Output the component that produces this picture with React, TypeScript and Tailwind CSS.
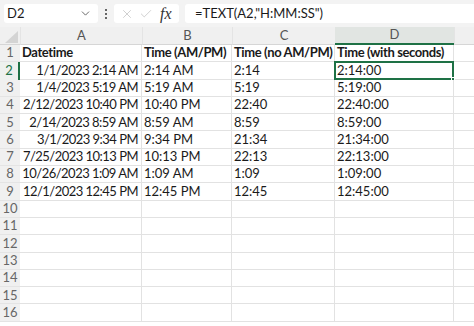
import { ChevronDown, X, Check } from "lucide-react";

const rows: string[][] = [
  ["Datetime", "Time (AM/PM)", "Time (no AM/PM)", "Time (with seconds)"],
  ["1/1/2023 2:14 AM", "2:14 AM", "2:14", "2:14:00"],
  ["1/4/2023 5:19 AM", "5:19 AM", "5:19", "5:19:00"],
  ["2/12/2023 10:40 PM", "10:40 PM", "22:40", "22:40:00"],
  ["2/14/2023 8:59 AM", "8:59 AM", "8:59", "8:59:00"],
  ["3/1/2023 9:34 PM", "9:34 PM", "21:34", "21:34:00"],
  ["7/25/2023 10:13 PM", "10:13 PM", "22:13", "22:13:00"],
  ["10/26/2023 1:09 AM", "1:09 AM", "1:09", "1:09:00"],
  ["12/1/2023 12:45 PM", "12:45 PM", "12:45", "12:45:00"],
];

const cols = ["A", "B", "C", "D"];

export default function App() {
  const allRows = Array.from({ length: 16 }, (_, i) => rows[i] ?? ["", "", "", ""]);

  return (
    <div
      className="w-[474px] h-[326px] overflow-hidden bg-white text-[#1a1a1a]"
      style={{ fontFamily: 'Lato, "Noto Sans", sans-serif' }}
    >
      {/* formula bar */}
      <div className="h-[27px] bg-[#f3f3f3] flex items-center pl-1 gap-[6px]">
        <div className="w-[94px] h-[19px] bg-white rounded-[3px] flex items-center justify-between pl-[3px] pr-[6px] text-[13px]">
          <span>D2</span>
          <ChevronDown size={13} strokeWidth={1.6} className="text-[#555]" />
        </div>
        <div className="flex flex-col gap-[2px] mx-[1px]">
          <div className="w-[2px] h-[2px] bg-[#666]" />
          <div className="w-[2px] h-[2px] bg-[#666]" />
          <div className="w-[2px] h-[2px] bg-[#666]" />
        </div>
        <div className="w-[65px] h-[19px] bg-white rounded-[3px] flex items-center pl-[6px] gap-[5px]">
          <X size={14} strokeWidth={1.2} className="text-[#bbb]" />
          <Check size={14} strokeWidth={1.2} className="text-[#bbb]" />
          <span
            className="italic text-[16px] text-[#333] leading-none ml-[2px]"
            style={{ fontFamily: '"Liberation Serif", serif' }}
          >
            fx
          </span>
        </div>
        <div className="flex-1 h-[19px] bg-white rounded-l-[3px] flex items-center pl-[10px] text-[13px]">
          =TEXT(A2,"H:MM:SS")
        </div>
      </div>

      {/* grid */}
      <div className="grid grid-cols-[20px_122px_90px_103px_119px_1fr]">
        {/* header row */}
        <div className="h-[18px] bg-[#f0f0f0] border-b border-[#d6d6d6] relative">
          <svg className="absolute left-[5px] top-[4px]" width="13" height="12" viewBox="0 0 13 12">
            <polygon points="13,0 13,12 0,12" fill="#d4d4d4" />
          </svg>
        </div>
        {cols.map((c) => (
          <div
            key={c}
            className={
              c === "D"
                ? "h-[18px] bg-[#e1e5e2] border-b-2 border-[#1e7145] flex items-center justify-center text-[13px] text-[#555]"
                : "h-[18px] bg-[#f0f0f0] border-b border-l border-[#d6d6d6] border-l-[#e4e4e4] flex items-center justify-center text-[13px] text-[#555]"
            }
          >
            {c}
          </div>
        ))}
        <div className="h-[18px] bg-[#f0f0f0] border-b border-l border-[#d6d6d6] border-l-[#e4e4e4]" />

        {allRows.map((r, i) => (
          <Row key={i} index={i + 1} cells={r} />
        ))}
      </div>
    </div>
  );
}

function Row({ index, cells }: { index: number; cells: string[] }) {
  const bold = index === 1;
  const selected = index === 2;
  return (
    <>
      <div
        className={
          selected
            ? "h-[17.3px] bg-[#eef1ee] border-r-2 border-[#1e7145] flex items-center justify-center text-[13px] text-[#1e7145]"
            : "h-[17.3px] bg-[#f0f0f0] border-b border-[#e4e4e4] flex items-center justify-center text-[13px] text-[#666]"
        }
      >
        {index}
      </div>
      {cells.map((c, j) => {
        const right = !bold && j === 0;
        const isSel = selected && j === 3;
        return (
          <div
            key={j}
            className={
              "h-[17.3px] border-b border-r border-[#e2e2e2] flex items-center text-[13px] whitespace-nowrap overflow-visible relative " +
              (right ? "justify-end pr-[3px] tracking-[-0.04em] " : "pl-[2px] ") +
              (bold ? "font-bold tracking-[-0.03em] " : "")
            }
          >
            {isSel && (
              <div className="absolute -left-[1px] -top-[1px] w-[120px] h-[19px] border-2 border-[#1e7145]">
                <div className="absolute -right-[3px] -bottom-[3px] w-[4px] h-[4px] bg-[#1e7145] border border-white" />
              </div>
            )}
            <span className="relative">{c}</span>
          </div>
        );
      })}
      <div className="h-[17.3px] border-b border-[#e2e2e2]" />
    </>
  );
}
